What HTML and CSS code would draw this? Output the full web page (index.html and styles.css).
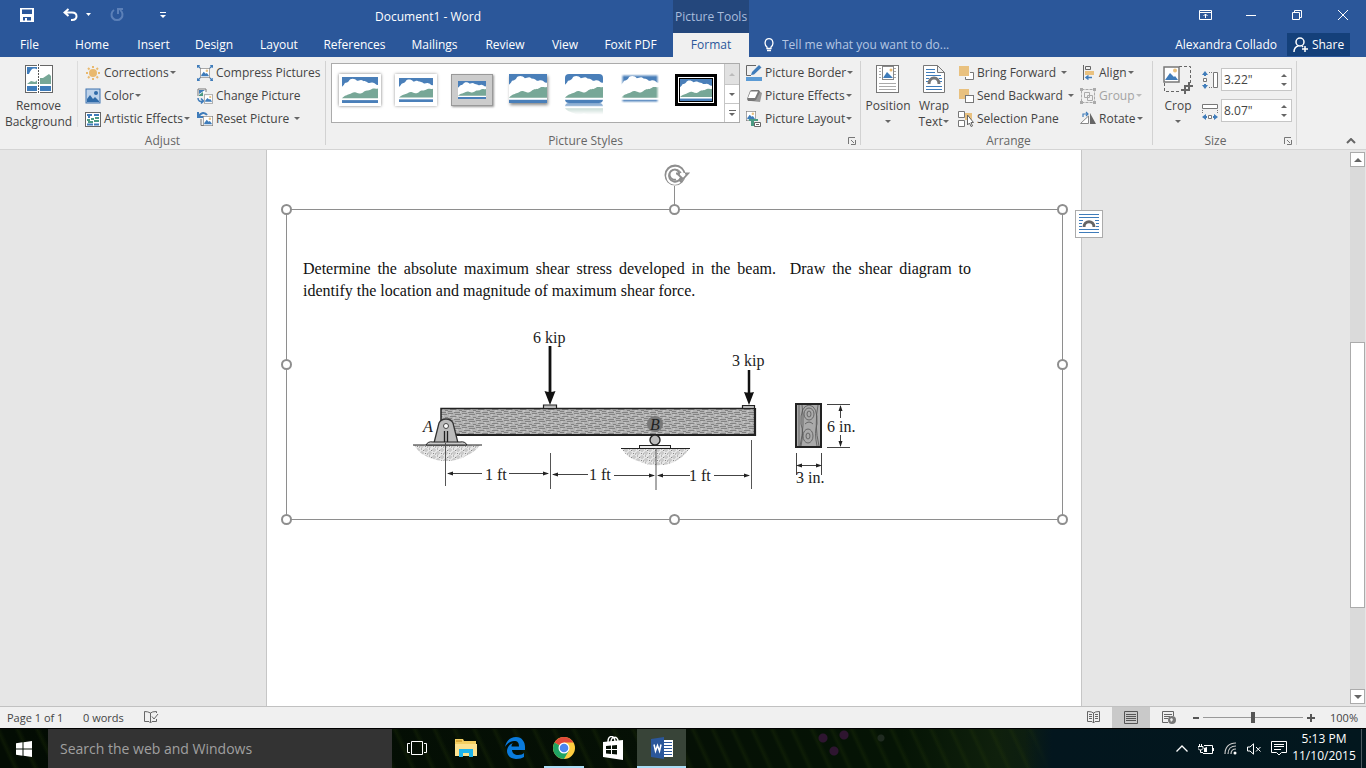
FILE: index.html
```html
<!DOCTYPE html>
<html lang="en">
<head>
    <meta charset="UTF-8">
    <meta name="viewport" content="width=device-width, initial-scale=1.0">
    <title>Document1 - Word</title>
    <link rel="stylesheet" href="styles.css">
</head>
<body>
    <!-- Shared drawings -->
    <svg class="sprite" width="0" height="0" aria-hidden="true">
        <symbol id="photo" viewBox="0 0 36 27" preserveAspectRatio="none">
            <rect width="36" height="27" fill="#fff"/>
            <path d="M0 0H36V8C34 9 33 6 31 6C29 5 28 7 26 6C24 4 22 5 21 4C19 2 17 4 15 4C13 1 8 1 7 4C5 7 3 5 2 8L0 10Z" fill="#4a7fb9"/>
            <path d="M0 22C3 19 5 19 7 18C10 17 11 15 14 16C17 17 18 18 21 16C24 13 26 15 29 13C31 11 33 13 36 12V22Z" fill="#77a797"/>
            <rect y="24" width="36" height="3" fill="#4a7fb9"/>
        </symbol>
        <symbol id="mini" viewBox="0 0 16 16">
            <rect x=".5" y=".5" width="15" height="15" fill="#fff" stroke="#777"/>
            <path d="M2 13V11L6 6L9 9L11 8L14 12V13Z" fill="#3f7cba"/>
            <circle cx="11" cy="4.500" r="2" fill="#e9c17f"/>
        </symbol>
        <symbol id="launcher" viewBox="0 0 8 8">
            <path d="M.5 7V.5H7M3 3L6 6M7.500 3V7.500H3" fill="none" stroke="#777"/>
        </symbol>
    </svg>

    <div class="word">
        <header class="title-bar">
            <div class="quick-access">
                <button class="qa-save" aria-label="Save"><svg width="14" height="14" viewBox="0 0 14 14"><path d="M0 0H14V14H0ZM2 1.500V6H12V1.500ZM3 9V12.500H5V10H7V12.500H11V9Z" fill="#fff" fill-rule="evenodd"/></svg></button>
                <button class="qa-undo" aria-label="Undo"><svg width="28" height="14" viewBox="0 0 28 14"><path d="M5.500 1L1.500 4.500L5.500 8M2 4.500H9C15 4.500 15 12 9 12H8" fill="none" stroke="#fff" stroke-width="2"/><path d="M23 5H28L25.500 8Z" fill="#fff"/></svg></button>
                <button class="qa-redo" aria-label="Repeat"><svg width="14" height="14" viewBox="0 0 14 14"><path d="M4 2A5.500 5.500 0 1 0 10 2M8 6V1H13" fill="none" stroke="#5c80b8" stroke-width="2"/></svg></button>
                <button class="qa-more" aria-label="Customize"><svg width="6" height="6" viewBox="0 0 6 6"><path d="M0 .5H6" stroke="#fff"/><path d="M0 3H6L3 6Z" fill="#fff"/></svg></button>
            </div>
            <h1 class="doc-title">Document1 - Word</h1>
            <div class="context-title">Picture Tools</div>
            <div class="window-buttons">
                <button aria-label="Ribbon options"><svg width="13" height="10" viewBox="0 0 13 10"><path d="M.5 .5H12.500V9.500H.5ZM.5 2.500H12.500M6.500 8V4M4.500 6L6.500 4L8.500 6" fill="none" stroke="#fff"/></svg></button>
                <button aria-label="Minimize"><svg width="10" height="10" viewBox="0 0 10 10"><path d="M0 5.500H10" stroke="#fff"/></svg></button>
                <button aria-label="Restore"><svg width="10" height="10" viewBox="0 0 10 10"><path d="M.5 2.500H7.500V9.500H.5ZM2.500 2.500V.5H9.500V7.500H7.500" fill="none" stroke="#fff"/></svg></button>
                <button aria-label="Close"><svg width="10" height="10" viewBox="0 0 10 10"><path d="M0 0L10 10M10 0L0 10" stroke="#fff"/></svg></button>
            </div>
        </header>

        <nav class="tabs">
            <div class="tab-list">
                <button class="tab">File</button>
                <button class="tab">Home</button>
                <button class="tab">Insert</button>
                <button class="tab">Design</button>
                <button class="tab">Layout</button>
                <button class="tab">References</button>
                <button class="tab">Mailings</button>
                <button class="tab">Review</button>
                <button class="tab">View</button>
                <button class="tab">Foxit PDF</button>
                <button class="tab active">Format</button>
            </div>
            <label class="tell-me">
                <svg width="10" height="14" viewBox="0 0 10 14"><path d="M3 10.500V9C0 7 .5 .7 5 .7S10 7 7 9V10.500ZM3 12.500H7" fill="none" stroke="#fff" stroke-width="1.300"/></svg>
                <input type="text" placeholder="Tell me what you want to do..." aria-label="Tell me what you want to do">
            </label>
            <span class="user">Alexandra Collado</span>
            <button class="share"><svg width="16" height="16" viewBox="0 0 16 16"><circle cx="7" cy="5" r="4" fill="none" stroke="#fff" stroke-width="1.500"/><path d="M1 15C1 11 3 9.500 5.500 9M9 9L10 10M12 9V15M9 12H15" fill="none" stroke="#fff" stroke-width="1.500"/></svg>Share</button>
        </nav>

        <section class="ribbon">
            <div class="group adjust">
                <div class="group-body">
                    <button class="big remove-bg">
                        <svg width="28" height="30" viewBox="0 0 28 30"><rect x=".5" y="1.500" width="27" height="27" fill="#fff" stroke="#666"/><path d="M2 3H13V6C8 3 6 5 4 10H2Z" fill="#3f7cba"/><path d="M2 20L6 17L10 18L15 14H18L24 10L26 12V20H2Z" fill="#77a797"/><path d="M2 22H26V27H2Z" fill="#3f7cba"/><path d="M13.500 0V30" stroke="#fff" stroke-width="3"/><path d="M13.500 0V30" stroke="#555" stroke-dasharray="2 1"/></svg>
                        <span>Remove<br>Background</span>
                    </button>
                    <div class="rows col-a">
                        <button class="cmd"><svg width="16" height="16" viewBox="0 0 16 16"><circle cx="8" cy="8" r="4" fill="#e9b96e"/><path d="M8 1V3M8 13V15M1 8H3M13 8H15M3 3L4.500 4.500M11.500 11.500L13 13M13 3L11.500 4.500M3 13L4.500 11.500" stroke="#e9b96e" stroke-width="2"/></svg>Corrections<i class="caret"></i></button>
                        <button class="cmd"><svg width="16" height="16" viewBox="0 0 16 16"><rect x="1" y="1" width="14" height="14" fill="#bdd2ea" stroke="#3f72ad"/><path d="M2 14V11L5 7L8 11L10 9L14 13V14Z" fill="#2e6aa8"/><circle cx="11" cy="5" r="2" fill="#2e6aa8"/></svg>Color<i class="caret"></i></button>
                        <button class="cmd"><svg width="16" height="16" viewBox="0 0 16 16"><rect x=".5" y="1.500" width="15" height="14" fill="#fff" stroke="#666"/><path d="M2 4H7M9 4H14M3 6H5" stroke="#3f7cba" stroke-width="2"/><path d="M2 9H5M6 8H9M10 7H14M3 11H8M9 10H14" stroke="#4b9a83" stroke-width="2"/><path d="M2 13.500H8M9 13.500H14" stroke="#3f7cba" stroke-width="2"/></svg>Artistic Effects<i class="caret"></i></button>
                    </div>
                    <div class="rows">
                        <button class="cmd"><svg width="16" height="16" viewBox="0 0 16 16"><path d="M0 3V0H3M0 0L3 3M13 0H16V3M16 0L13 3M0 13V16H3M0 16L3 13M13 16H16V13M16 16L13 13" fill="none" stroke="#3f7cba" stroke-width="1.500"/><use href="#mini" x="3" y="3" width="10" height="10"/></svg>Compress Pictures</button>
                        <button class="cmd"><svg width="16" height="16" viewBox="0 0 16 16"><path d="M1 8V1H9V4" fill="#fff" stroke="#777"/><path d="M2 2H8L5 4L2 6Z" fill="#3f7cba"/><path d="M2 7L6 4V8H2Z" fill="#4b9a83"/><path d="M1 10C1 13 3 14 6 13M4 10.500L6.500 13L4 15.500" fill="none" stroke="#3f7cba" stroke-width="1.500"/><use href="#mini" x="7" y="6" width="9" height="10"/></svg>Change Picture</button>
                        <button class="cmd"><svg width="16" height="16" viewBox="0 0 16 16"><path d="M1 1V6H6M1.500 5.500C4 1 8 1 10 4" fill="none" stroke="#3f7cba" stroke-width="2"/><path d="M4 8V14.500H7" fill="none" stroke="#777"/><use href="#mini" x="6" y="4" width="10" height="12"/></svg>Reset Picture<i class="caret wide"></i></button>
                    </div>
                </div>
                <div class="group-label">Adjust</div>
            </div>

            <div class="group styles">
                <div class="group-body">
                    <div class="gallery">
                        <button class="thumb t1" aria-label="Simple Frame, White"><svg><use href="#photo"/></svg></button>
                        <button class="thumb t2" aria-label="Beveled Matte, White"><svg><use href="#photo"/></svg></button>
                        <button class="thumb t3" aria-label="Metal Frame"><svg><use href="#photo"/></svg></button>
                        <button class="thumb t4" aria-label="Drop Shadow Rectangle"><svg><use href="#photo"/></svg></button>
                        <button class="thumb t5" aria-label="Reflected Rounded Rectangle"><svg><use href="#photo"/></svg></button>
                        <button class="thumb t6" aria-label="Soft Edge Rectangle"><svg><use href="#photo"/></svg></button>
                        <button class="thumb t7" aria-label="Double Frame, Black"><svg><use href="#photo"/></svg></button>
                        <div class="gallery-scroll">
                            <button class="off" aria-label="Row up"><i class="caret up"></i></button>
                            <button aria-label="Row down"><i class="caret"></i></button>
                            <button class="more" aria-label="More styles"><i class="caret"></i></button>
                        </div>
                    </div>
                    <div class="rows">
                        <button class="cmd"><svg width="16" height="16" viewBox="0 0 16 16"><path d="M10 .5H.5V10.500H5" fill="none" stroke="#666"/><path d="M5 10L6 7L13 0L15.500 2.500L8 9.500Z" fill="#3f7cba"/><rect y="12" width="16" height="4" fill="#5b9bd5"/></svg>Picture Border<i class="caret"></i></button>
                        <button class="cmd"><svg width="16" height="16" viewBox="0 0 16 16"><path d="M5 13L14 14L16 5L13 3Z" fill="#999"/><path d="M1 11L4 3Q5 2 6 2H13L14 4L10 12L8 13H2Z" fill="#777"/><path d="M2 10L4.500 3.500H12L9 10Z" fill="#fff"/></svg>Picture Effects<i class="caret"></i></button>
                        <button class="cmd"><svg width="16" height="16" viewBox="0 0 16 16"><use href="#mini" width="10" height="10"/><path d="M3 8H12V10H8V14H10V15H5V10H3Z" fill="#4b9a83"/><path d="M8.500 11.500H14.500V15.500H8.500ZM10 13.500H13" fill="#fff" stroke="#666"/></svg>Picture Layout<i class="caret"></i></button>
                    </div>
                </div>
                <div class="group-label">Picture Styles</div>
                <button class="launch" aria-label="Format shape"><svg width="8" height="8"><use href="#launcher"/></svg></button>
            </div>

            <div class="group arrange">
                <div class="group-body">
                    <button class="big position">
                        <svg width="24" height="30" viewBox="0 0 24 30"><rect x=".5" y="1.500" width="22" height="27" fill="#fff" stroke="#777"/><path d="M3 4.500H5M3 7.500H5M3 10.500H5M3 13.500H5M18 4.500H20M18 7.500H20M18 10.500H20M18 13.500H20M3 19.500H20M3 22.500H20M3 25.500H20" stroke="#aaa"/><rect x="6.500" y="2.500" width="11" height="13" fill="#fff" stroke="#888"/><path d="M7 14L11 8L17 14Z" fill="#3f7cba"/><circle cx="15" cy="6" r="1.500" fill="#e9b96e"/></svg>
                        <span>Position<br><i class="caret"></i></span>
                    </button>
                    <button class="big wrap">
                        <svg width="22" height="30" viewBox="0 0 22 30"><path d="M.5 1.500H14.500L21.500 8.500V28.500H.5ZM14.500 1.500V8.500H21.500" fill="#fff" stroke="#777"/><path d="M3 5.500H12M3 8.500H12M3 11.500H18M3 14.500H6M16 14.500H19M3 17.500H5M17 17.500H19M3 22.500H19M3 25.500H19" stroke="#3f7cba"/><path d="M6 20C6 12 16 12 16 20" fill="none" stroke="#777" stroke-width="3"/></svg>
                        <span>Wrap<br>Text<i class="caret"></i></span>
                    </button>
                    <div class="rows col-order">
                        <button class="cmd"><svg width="16" height="16" viewBox="0 0 16 16"><path d="M12 7.500H15.500V14.500H7.500V12" fill="#fff" stroke="#777"/><rect x="1" y="1" width="10" height="10" fill="#e9c17f"/></svg>Bring Forward<i class="caret wide"></i></button>
                        <button class="cmd"><svg width="16" height="16" viewBox="0 0 16 16"><rect x="1" y="1" width="10" height="10" fill="#e9c17f"/><rect x="7.500" y="7.500" width="8" height="7" fill="#fff" stroke="#777"/></svg>Send Backward<i class="caret wide"></i></button>
                        <button class="cmd"><svg width="16" height="16" viewBox="0 0 16 16"><path d="M.5 .5H6.500V6.500H.5ZM.5 9.500H6.500V15.500H.5Z" fill="#fff" stroke="#777"/><rect x="7" y="2" width="7" height="7" fill="#e9c17f"/><path d="M9.500 4V14L11.500 12L13 15.500L14.500 15L13 11.500H15.500Z" fill="#fff" stroke="#666"/></svg>Selection Pane</button>
                    </div>
                    <div class="rows">
                        <button class="cmd"><svg width="16" height="16" viewBox="0 0 16 16"><path d="M3.500 0V15M5.500 1.500H10.500V4.500H5.500Z" fill="none" stroke="#666"/><rect x="5" y="6" width="9" height="4" fill="#e9c17f"/><path d="M6 12.500H12M8.500 10.500L6 12.500L8.500 14.500" fill="none" stroke="#3f7cba" stroke-width="1.500"/></svg>Align<i class="caret"></i></button>
                        <button class="cmd" disabled><svg width="16" height="16" viewBox="0 0 16 16"><path d="M1.500 1.500H14.500V14.500H1.500Z" fill="none" stroke="#aaa" stroke-dasharray="3 1"/><path d="M4.500 4.500H9.500V9.500H4.500ZM7.500 7.500H12.500V12.500H7.500Z" fill="none" stroke="#aaa"/><path d="M0 0H3V3H0ZM13 0H16V3H13ZM0 13H3V16H0ZM13 13H16V16H13Z" fill="#aaa"/></svg>Group<i class="caret"></i></button>
                        <button class="cmd"><svg width="16" height="16" viewBox="0 0 16 16"><path d="M.5 12.500L8.500 5V12.500Z" fill="#fff" stroke="#888"/><path d="M10 2V13H16Z" fill="#666"/><path d="M3 6V3H8M6 1L8 3L6 5" fill="none" stroke="#3f7cba" stroke-width="1.200"/></svg>Rotate<i class="caret"></i></button>
                    </div>
                </div>
                <div class="group-label">Arrange</div>
            </div>

            <div class="group size">
                <div class="group-body">
                    <button class="big crop">
                        <svg width="30" height="30" viewBox="0 0 30 30"><path d="M16 2.500H27.500V20M1.500 19V27.500H18" fill="none" stroke="#666" stroke-dasharray="3 2"/><rect x="1" y="3" width="15" height="15" fill="#fff" stroke="#777" stroke-width="1.500"/><path d="M2 16L7 9L11 13L12 12L15 16Z" fill="#3f7cba"/><circle cx="12" cy="6.500" r="2" fill="#e9c17f"/><path d="M18 26H26V18M22 30V22H30" fill="none" stroke="#666" stroke-width="2"/></svg>
                        <span>Crop<br><i class="caret"></i></span>
                    </button>
                    <div class="dims">
                        <div class="dim">
                            <label for="height"><svg width="16" height="18" viewBox="0 0 16 18"><path d="M3 0L6 4H0ZM3 18L0 14H6ZM2 3H4V5H2ZM2 13H4V15H2Z" fill="#3f7cba"/><path d="M1.500 7.500H4.500V10.500H1.500ZM11.500 1.500H15.500V16.500H11.500Z" fill="#fff" stroke="#777"/><path d="M7 1.500H11M7 16.500H11" stroke="#777" stroke-dasharray="1 1"/></svg></label>
                            <div class="spin"><input id="height" type="text" value='3.22"' aria-label="Shape height"><span class="arrows"><button aria-label="Taller"><i class="caret up"></i></button><button aria-label="Shorter"><i class="caret"></i></button></span></div>
                        </div>
                        <div class="dim">
                            <label for="width"><svg width="16" height="18" viewBox="0 0 16 18"><path d="M.5 2.500H15.500V6.500H.5ZM6.500 13.500H9.500V16.500H6.500Z" fill="#fff" stroke="#777"/><path d="M0 15L4 12V14H5V16H4V18ZM16 15L12 12V14H11V16H12V18Z" fill="#3f7cba"/><path d="M.5 8V12M15.500 8V12" stroke="#777" stroke-dasharray="1 1"/></svg></label>
                            <div class="spin"><input id="width" type="text" value='8.07"' aria-label="Shape width"><span class="arrows"><button aria-label="Wider"><i class="caret up"></i></button><button aria-label="Narrower"><i class="caret"></i></button></span></div>
                        </div>
                    </div>
                </div>
                <div class="group-label">Size</div>
                <button class="launch" aria-label="Layout dialog"><svg width="8" height="8"><use href="#launcher"/></svg></button>
            </div>
            <button class="collapse" aria-label="Collapse ribbon"><svg width="10" height="6" viewBox="0 0 10 6"><path d="M1 5L5 1L9 5" fill="none" stroke="#666" stroke-width="2"/></svg></button>
        </section>

        <main class="workspace">
            <div class="canvas">
                <article class="page">
                    <div class="picture">
                        <p class="problem">Determine the absolute maximum shear stress developed in the beam.&nbsp; Draw the shear diagram to identify the location and magnitude of maximum shear force.</p>
                        <svg class="beam" viewBox="400 325 480 175" width="480" height="175">
                            <defs>
                                <pattern id="grain" width="14" height="7" patternUnits="userSpaceOnUse">
                                    <rect width="14" height="7" fill="#b2b2b2"/>
                                    <path d="M0 .5H5M7 1.500H13M2 3.500H9M11 4.500H14M0 5.500H4M6 6.500H12" stroke="#777" stroke-width=".8"/>
                                    <path d="M1 2H3M8 3H10M5 5H7M12 6H13" stroke="#ddd" stroke-width=".8"/>
                                </pattern>
                                <pattern id="gravel" width="8" height="7" patternUnits="userSpaceOnUse">
                                    <rect width="8" height="7" fill="#e6e6e6"/>
                                    <circle cx="2" cy="2" r="1.200" fill="#fff" stroke="#888" stroke-width=".6"/>
                                    <circle cx="6" cy="5" r="1.200" fill="#fff" stroke="#888" stroke-width=".6"/>
                                    <path d="M5 1H6M1 5.500H2M3 6H4M7 2.500H8" stroke="#888"/>
                                </pattern>
                            </defs>
                            <!-- ground -->
                            <path d="M414 445H480C476 451 470 454 464 457C455 462 440 462 430 458C422 455 418 451 414 445Z" fill="url(#gravel)"/>
                            <path d="M622 449H689C685 455 680 459 674 462C664 467 648 466 638 461C630 459 625 454 622 449Z" fill="url(#gravel)"/>
                            <path d="M413 445H482M621 448.500H690" stroke="#222" stroke-width="1.200"/>
                            <!-- beam -->
                            <rect x="441" y="408.500" width="314" height="26.500" fill="url(#grain)"/>
                            <path d="M441 436V408.500H755" fill="none" stroke="#222" stroke-width="1.500"/>
                            <path d="M441 435H755V408" fill="none" stroke="#222" stroke-width="2.200"/>
                            <!-- pin support -->
                            <path d="M434 443L439 423Q441 419 446 419Q451 419 453 423L458 443Z" fill="#bbb" stroke="#333" stroke-width="1.300"/>
                            <circle cx="446" cy="426" r="2.500" fill="#fff" stroke="#444"/>
                            <path d="M444.500 431V442M447.500 431V442" stroke="#222" stroke-width="1.300"/>
                            <path d="M426 445Q428 441 433 442H460Q465 441 467 445Z" fill="#ccc" stroke="#222"/>
                            <!-- roller support -->
                            <circle cx="655" cy="424" r="8" fill="#777"/>
                            <circle cx="655" cy="440" r="5" fill="#bbb" stroke="#222" stroke-width="1.400"/>
                            <rect x="639.500" y="445.500" width="31" height="3" fill="#eee" stroke="#222"/>
                            <!-- loads -->
                            <path d="M550 346V394" stroke="#111" stroke-width="2.800"/>
                            <path d="M544.500 391Q550 393 555.500 391L550 405Z" fill="#111"/>
                            <path d="M749 370V395" stroke="#111" stroke-width="2.500"/>
                            <path d="M744 392Q749 393 754 392L749 405Z" fill="#111"/>
                            <path d="M543.500 405H556.500V408.500H543.500ZM742.500 405.500H754.500V408.500H742.500Z" fill="#bbb" stroke="#222" stroke-width="1.200"/>
                            <!-- dimensions -->
                            <path d="M445.500 443V486M550.500 453V489M656 448V490M751.500 440V489" stroke="#555"/>
                            <path d="M448 473.500H482M509 473.500H548M553 474.500H588M614 475.500H654M658 475.500H690M714 475.500H749" stroke="#444"/>
                            <path d="M447 473.500L453 471.500V475.500ZM549 473.500L543 471.500V475.500ZM552 474.500L558 472.500V476.500ZM655 475.500L649 473.500V477.500ZM657 475.500L663 473.500V477.500ZM750 475.500L744 473.500V477.500Z" fill="#222"/>
                            <!-- cross section -->
                            <rect x="796" y="404" width="25" height="43" fill="#aaa"/>
                            <path d="M799 405V446M802 405Q805 425 800 446M818 405Q814 425 819 446" fill="none" stroke="#666"/>
                            <g fill="none" stroke="#555" stroke-width=".8">
                                <ellipse cx="809" cy="414" rx="2" ry="3"/><ellipse cx="809" cy="414" rx="5" ry="6"/><path d="M801 424Q800 406 809 405Q818 406 817 424Q814 432 817 446"/>
                                <ellipse cx="808" cy="436" rx="2" ry="3"/><ellipse cx="808" cy="436" rx="5" ry="7"/><path d="M801 424Q804 432 801 446M805 424Q809 420 813 424"/>
                            </g>
                            <rect x="796" y="404" width="25" height="43" fill="none" stroke="#222" stroke-width="2"/>
                            <path d="M827 404.500H850M827 447.500H850M840.500 406V418M840.500 435V446M796.500 453V475M821.500 453V475M798 465.500H820" stroke="#444"/>
                            <path d="M840.500 405L838.500 411H842.500ZM840.500 447L838.500 441H842.500ZM796 465.500L802 463.500V467.500ZM822 465.500L816 463.500V467.500Z" fill="#222"/>
                            <g class="beam-text">
                                <text x="533" y="343">6 kip</text>
                                <text x="732" y="366">3 kip</text>
                                <text x="485" y="480">1 ft</text>
                                <text x="589" y="480">1 ft</text>
                                <text x="689" y="481">1 ft</text>
                                <text x="827" y="432">6 in.</text>
                                <text x="796" y="483">3 in.</text>
                                <text x="423" y="432" class="node">A</text>
                                <text x="650" y="430" class="node">B</text>
                            </g>
                        </svg>
                        <i class="stem"></i>
                        <svg class="rotate" width="26" height="22" viewBox="0 0 26 22"><circle cx="11" cy="11" r="8" fill="none" stroke="#8e8e8e" stroke-width="5"/><path d="M16 18A8 8 0 1 1 19 10.500" fill="none" stroke="#fff" stroke-width="2"/><path d="M14 19L20 15L25 9H13L19 15.500" fill="#fff"/><path d="M12 9.500H16M21 9.500H24L19 15L13 9.500M12 15.500A5 5 0 1 1 15.500 9.500M16 14.500L17 18" fill="none" stroke="#8e8e8e" stroke-width="1.800"/></svg>
                        <i class="handle nw"></i><i class="handle n"></i><i class="handle ne"></i>
                        <i class="handle w"></i><i class="handle e"></i>
                        <i class="handle sw"></i><i class="handle s"></i><i class="handle se"></i>
                        <button class="layout-options" aria-label="Layout Options"><svg width="20" height="20" viewBox="0 0 20 20"><path d="M0 .5H20M0 3.500H20M0 6.500H4M16 6.500H20M0 9.500H3M17 9.500H20M0 12.500H3M17 12.500H20M0 15.500H20M0 18.500H20" stroke="#3f7cba"/><path d="M5 13C5 6 15 6 15 13" fill="none" stroke="#666" stroke-width="3"/></svg></button>
                    </div>
                </article>
            </div>
            <div class="scrollbar">
                <button aria-label="Scroll up"><i class="caret up"></i></button>
                <div class="track"><div class="grip"></div></div>
                <button aria-label="Scroll down"><i class="caret"></i></button>
            </div>
        </main>

        <footer class="status">
            <span class="pages">Page 1 of 1</span>
            <span class="words">0 words</span>
            <button class="proof" aria-label="Proofing"><svg width="15" height="13" viewBox="0 0 15 13"><path d="M6.500 11.500V2Q4 .5 .5 .5V10.500H5L6.500 12L8 10.500H12.500V8M6.500 2Q8 .5 12.500 .5V2M8 5.500L10 8L14 3" fill="none" stroke="#666"/></svg></button>
            <div class="views">
                <button aria-label="Read Mode"><svg width="13" height="13" viewBox="0 0 13 13"><path d="M.5 .5Q5 .5 6.500 2Q8 .5 12.500 .5V10.500H8L6.500 12L5 10.500H.5ZM6.500 2V12" fill="none" stroke="#666"/><path d="M2 3.500H5M2 5.500H5M2 7.500H5M8 3.500H11M8 5.500H11M8 7.500H11" stroke="#666"/></svg></button>
                <button class="active" aria-label="Print Layout"><svg width="14" height="13" viewBox="0 0 14 13"><path d="M.5 .5H13.500V12.500H.5ZM2 3.500H12M2 5.500H12M2 7.500H12M2 9.500H12" fill="none" stroke="#555"/></svg></button>
                <button aria-label="Web Layout"><svg width="14" height="13" viewBox="0 0 14 13"><path d="M11.500 5V.5H.5V11.500H6M2 3.500H10M2 5.500H8M2 7.500H6" fill="none" stroke="#666"/><circle cx="10" cy="9" r="4" fill="#777"/><path d="M8 8L10 7L11 9L9 11Z" fill="#eee"/></svg></button>
            </div>
            <button class="zoom-step minus" aria-label="Zoom out"></button>
            <input class="zoom" type="range" min="0" max="100" value="50" aria-label="Zoom">
            <button class="zoom-step plus" aria-label="Zoom in"></button>
            <span class="percent">100%</span>
        </footer>
    </div>

    <div class="taskbar">
        <button class="start" aria-label="Start"><svg width="16" height="16" viewBox="0 0 16 16"><path d="M0 2.300L6.500 1.300V7.500H0ZM7.500 1.200L16 0V7.500H7.500ZM0 8.500H6.500V14.700L0 13.700ZM7.500 8.500H16V16L7.500 14.800Z" fill="#fff"/></svg></button>
        <input class="search" type="text" placeholder="Search the web and Windows" aria-label="Search the web and Windows">
        <div class="apps">
            <button aria-label="Task View"><svg width="20" height="14" viewBox="0 0 20 14"><path d="M4.500 .5H15.500V13.500H4.500ZM3 2.500H.5V11.500H3M17 2.500H19.500V11.500H17" fill="none" stroke="#fff"/></svg></button>
            <button aria-label="File Explorer"><svg width="22" height="20" viewBox="0 0 22 20"><path d="M0 1H8L9 3H21V18H0Z" fill="#f4cf62"/><path d="M1 2H7V4H1Z" fill="#d9a93a"/><path d="M0 6H22V18H0Z" fill="#fce28f"/><path d="M4 19V11H18V19H14V15H8V19Z" fill="#1eb4ea"/></svg></button>
            <button aria-label="Edge"><svg width="22" height="22" viewBox="0 0 22 22"><path d="M1 10C2 4 6 0 12 0C18 0 21 5 21 10V13H8C8 16 11 18 14 18C17 18 19 17 20 16V20C18 21 16 22 12 22C6 22 3 18 3 14C3 10 6 7 9 6C8 7 7.500 8 7.500 9.500H15C15 6 14 4 10 4C6 4 3 7 1 10Z" fill="#0a7bdc"/></svg></button>
            <button class="running" aria-label="Chrome"><svg width="22" height="22" viewBox="0 0 22 22"><circle cx="11" cy="11" r="11" fill="#ffcd40"/><path d="M11 11L1.500 5.500A11 11 0 0 1 20.500 5.500H11Z" fill="#e04a3a"/><path d="M11 11L1.500 5.500A11 11 0 0 0 11 22L15.800 13.700Z" fill="#1fa463"/><circle cx="11" cy="11" r="5.500" fill="#fff"/><circle cx="11" cy="11" r="4.300" fill="#4a86ee"/></svg></button>
            <button aria-label="Store"><svg width="22" height="24" viewBox="0 0 22 24"><path d="M1 6L21 4V24L1 21Z" fill="#fff"/><path d="M6 6C6 -1 12 -1 13 5M9 6C9 0 16 0 16 5" fill="none" stroke="#fff" stroke-width="1.500"/><path d="M4 10L9 9.500V13H4ZM10 9.400L15 9V13H10ZM4 14H9V18L4 17.500ZM10 14H15V18.500L10 18Z" fill="#061006"/></svg></button>
            <button class="current" aria-label="Word"><svg width="22" height="22" viewBox="0 0 22 22"><rect x="11" y="3" width="11" height="17" fill="#fff"/><path d="M13 5.500H21M13 8.500H21M13 11.500H21M13 14.500H21M13 17.500H21" stroke="#2b579a"/><path d="M0 2L13 0V22L0 20Z" fill="#2b579a"/><path d="M3 7.500L4.500 14L6.500 8.500L8.500 14L10 7.500" fill="none" stroke="#fff" stroke-width="1.500"/></svg></button>
        </div>
        <div class="tray">
            <svg width="12" height="7" viewBox="0 0 12 7"><path d="M.5 6.500L6 1L11.500 6.500" fill="none" stroke="#fff" stroke-width="1.300"/></svg>
            <svg width="16" height="12" viewBox="0 0 16 12"><path d="M6 2.500H14.500V10.500H5M15.500 5V8M0 3.500H5V5.500L3.500 7H1.500L0 5.500ZM1.500 3V1M3.500 3V1M2.500 7V9.500H5" fill="none" stroke="#fff"/><path d="M6 5L9 4V9H6Z" fill="#fff"/></svg>
            <svg width="13" height="13" viewBox="0 0 13 13"><path d="M1 12C1 5 5 1 12 1M4 12C4 7 7 4 12 4M7 12C7 9 9 7 12 7" fill="none" stroke="#ccc" stroke-width="1.200"/><circle cx="11" cy="11" r="1.500" fill="#fff"/></svg>
            <svg width="14" height="12" viewBox="0 0 14 12"><path d="M.5 4H3L6.500 .8V11.200L3 8H.5ZM9 4L13.500 8.500M13.500 4L9 8.500" fill="none" stroke="#fff"/></svg>
            <svg width="16" height="15" viewBox="0 0 16 15"><path d="M.5 .5H15.500V11.500H10.500L8 14L5.500 11.500H.5ZM3 3.500H13M3 5.500H13M3 8.500H10" fill="none" stroke="#fff"/></svg>
        </div>
        <div class="clock">5:13 PM<br>11/10/2015</div>
    </div>
</body>
</html>
```
FILE: styles.css
```css
* {
    box-sizing: border-box;
}

body {
    margin: 0;
    height: 100vh;
    display: flex;
    flex-direction: column;
    overflow: hidden;
    font-family: "Open Sans", "Noto Sans", sans-serif;
    font-size: 12px;
    line-height: 16px;
    color: #444;
}

button,
input {
    font: inherit;
    color: inherit;
    background: none;
    border: none;
    padding: 0;
    margin: 0;
}

button {
    display: flex;
    align-items: center;
    justify-content: center;
    white-space: nowrap;
}

svg {
    display: block;
    flex: none;
}

.sprite {
    position: absolute;
}

.word {
    flex: 1;
    min-height: 0;
    display: flex;
    flex-direction: column;
}

/* small drop-down arrow */
.caret {
    flex: none;
    display: inline-block;
    border: 3px solid transparent;
    border-top-color: #666;
    border-bottom: none;
    margin-left: 1px;
}

.caret.up {
    border-top: none;
    border-bottom: 3px solid #666;
}

.caret.wide {
    margin-left: 5px;
}

/* Title bar */
.title-bar {
    display: flex;
    height: 33px;
    background: #2b579a;
    color: #fff;
}

.quick-access {
    display: flex;
    align-items: center;
    width: 183px;
    padding: 0 0 4px 20px;
}

.qa-undo {
    margin-left: 29px;
}

.qa-redo {
    margin-left: 19px;
}

.qa-more {
    margin-left: 36px;
}

.doc-title {
    width: 490px;
    margin: 0;
    font-size: 12px;
    font-weight: normal;
    line-height: 33px;
    text-align: center;
}

.context-title {
    width: 76px;
    background: #24477c;
    color: #a9bddd;
    line-height: 34px;
    text-align: center;
    white-space: nowrap;
}

.window-buttons {
    display: flex;
    margin-left: auto;
    padding-bottom: 3px;
}

.window-buttons button {
    width: 46px;
}

/* Tabs */
.tabs {
    display: flex;
    height: 24px;
    background: #2b579a;
    color: #fff;
}

.tab-list {
    display: grid;
    grid-template-columns: 59px 66px 57px 64px 66px 85px 75px 66px 54px 77px 4px 76px;
}

.tab.active {
    grid-column: 12;
    background: #f0f0f0;
    color: #2b579a;
}

.tell-me {
    display: flex;
    align-items: center;
    gap: 8px;
    flex: 1;
    padding-left: 15px;
}

.tell-me input {
    flex: 1;
}

.tell-me input::placeholder {
    color: #b5c6e2;
    opacity: 1;
}

.user {
    line-height: 24px;
    margin-right: 10px;
}

.share {
    width: 63px;
    gap: 3px;
    height: 23px;
    margin-right: 16px;
    background: #14407a;
}

/* Ribbon */
.ribbon {
    display: flex;
    height: 93px;
    padding-top: 4px;
    background: #f0f0f0;
    border-bottom: 1px solid #d4d4d4;
}

.group {
    position: relative;
    display: flex;
    flex-direction: column;
    margin-bottom: 4px;
    border-right: 1px solid #d2d2d2;
}

.group-body {
    display: flex;
    height: 69px;
}

.group-label {
    text-align: center;
    line-height: 22px;
    margin-bottom: -6px;
    color: #666;
}

.adjust {
    width: 326px;
}

.styles {
    width: 535px;
    padding-left: 5px;
}

.arrange {
    width: 292px;
    padding-left: 4px;
}

.size {
    width: 144px;
    padding-left: 8px;
}

.size .group-label {
    padding-right: 26px;
}

.styles .group-label {
    padding-right: 20px;
}

.launch {
    position: absolute;
    right: 4px;
    bottom: 0;
}

.big {
    flex-direction: column;
    justify-content: flex-start;
    padding-top: 3px;
    text-align: center;
}

.big span {
    margin-top: 4px;
}

.big span .caret {
    vertical-align: 3px;
}

.remove-bg {
    width: 78px;
    height: 66px;
    border-right: 1px solid #dcdcdc;
}

.position {
    width: 46px;
}

.wrap {
    width: 46px;
}

.crop {
    width: 34px;
}

.position .caret,
.crop .caret {
    margin-left: 0;
}

.rows {
    display: grid;
    grid-template-rows: repeat(3, 23px);
    padding-left: 6px;
}

.cmd {
    justify-content: flex-start;
}

.cmd svg {
    margin-right: 3px;
}

.cmd:disabled {
    color: #a3a3a3;
}

.cmd:disabled .caret {
    border-top-color: #bbb;
}

.col-a {
    width: 118px;
    padding-left: 7px;
}

.col-order {
    width: 122px;
    padding-left: 1px;
}

.adjust .rows:last-child {
    padding-left: 1px;
}

.arrange .rows:last-child {
    padding-left: 1px;
}

/* Style gallery */
.gallery {
    display: flex;
    width: 409px;
    height: 60px;
    margin-top: 2px;
    background: #fff;
    border: 1px solid #ababab;
}

.thumb {
    width: 56px;
    align-items: flex-start;
    padding-top: 10px;
}

.thumb svg {
    width: 42px;
    height: 32px;
}

.t1 svg {
    padding: 3px;
    box-shadow: 0 0 3px #777;
}

.t2 svg {
    padding: 4px;
    box-shadow: 0 0 3px #999;
}

.t3 svg {
    padding: 6px;
    background: #ccc;
    border: 1px solid #999;
    box-shadow: 1px 1px 2px #999;
}

.t4 svg,
.t5 svg,
.t6 svg {
    width: 38px;
    height: 29px;
}

.t4 svg {
    box-shadow: 1px 2px 3px #888;
}

.t5 svg {
    border-radius: 4px;
    -webkit-box-reflect: below 0 linear-gradient(transparent 60%, rgba(0, 0, 0, 0.7));
}

.t6 svg {
    -webkit-mask: linear-gradient(90deg, transparent, #000 3px, #000 35px, transparent), linear-gradient(transparent, #000 3px, #000 26px, transparent);
    -webkit-mask-composite: source-in;
    mask-composite: intersect;
}

.t7 svg {
    padding: 2px;
    border: 3px solid #000;
    background: #000;
    outline: 1px solid #fff;
    outline-offset: -4px;
}

.gallery-scroll {
    display: grid;
    grid-template-rows: 20px 19px 19px;
    width: 15px;
    margin-left: auto;
    border-left: 1px solid #c6c6c6;
}

.gallery-scroll button + button {
    border-top: 1px solid #c6c6c6;
}

.gallery-scroll .caret {
    margin: 0;
}

.gallery-scroll .off {
    background: #e1e1e1;
}

.off .caret.up {
    border-bottom-color: #bbb;
}

.more {
    flex-direction: column;
    gap: 2px;
}

.more::before {
    content: "";
    width: 7px;
    height: 1px;
    background: #666;
}

/* Size boxes */
.dims {
    display: grid;
    align-content: start;
    gap: 8px;
    padding: 7px 0 0 7px;
}

.dim {
    display: flex;
    align-items: center;
    gap: 3px;
}

.spin {
    display: flex;
    width: 71px;
    height: 23px;
    padding: 0 4px 0 2px;
    background: #fff;
    border: 1px solid #c6c6c6;
}

.spin input {
    flex: 1;
    min-width: 0;
}

.arrows {
    display: grid;
    align-content: center;
    gap: 6px;
}

.arrows .caret {
    margin: 0;
}

.collapse {
    align-self: flex-end;
    margin: 0 10px 5px auto;
}

/* Document */
.workspace {
    flex: 1;
    min-height: 0;
    display: flex;
    background: #e6e6e6;
}

.canvas {
    flex: 1;
    overflow: hidden;
}

.page {
    width: 816px;
    min-height: 100%;
    margin: 0 auto;
    padding: 59px 18px 0 19px;
    background: #fff;
    border: 1px solid #c6c6c6;
    border-width: 0 1px;
}

.picture {
    position: relative;
    width: 777px;
    height: 311px;
    border: 1px solid #8e8e8e;
    padding: 48px 16px 0;
    color: #111;
}

.problem {
    width: 668px;
    margin: 0;
    font-family: "Liberation Serif", serif;
    font-size: 16px;
    line-height: 22px;
    text-align: justify;
}

.beam {
    margin: 23px 0 0 97px;
}

.beam-text {
    font-family: "Liberation Serif", serif;
    font-size: 16px;
    fill: #222;
}

.beam-text .node {
    font-style: italic;
}

.handle {
    position: absolute;
    width: 11px;
    height: 11px;
    background: #fff;
    border: 2px solid #8e8e8e;
    border-radius: 50%;
}

.nw, .n, .ne { top: -6px; }
.w, .e { top: calc(50% - 6px); }
.sw, .s, .se { bottom: -6px; }
.nw, .w, .sw { left: -6px; }
.n, .s { left: calc(50% - 6px); }
.ne, .e, .se { right: -6px; }

.stem {
    position: absolute;
    left: calc(50% - 1px);
    bottom: 100%;
    height: 24px;
    border-left: 1px solid #8e8e8e;
}

.rotate {
    position: absolute;
    left: 377px;
    top: -46px;
}

.layout-options {
    position: absolute;
    left: 788px;
    top: 0;
    width: 28px;
    height: 28px;
    background: #fff;
    border: 1px solid #ababab;
}

.scrollbar {
    display: flex;
    flex-direction: column;
    width: 18px;
    padding: 2px 1px 2px 2px;
}

.scrollbar button {
    height: 15px;
    background: #fff;
    border: 1px solid #ababab;
}

.scrollbar .caret {
    margin: 0;
    border-width: 4px;
    border-bottom-width: 0;
}

.scrollbar .caret.up {
    border-width: 0 4px 4px;
}

.track {
    flex: 1;
    background: #dadada;
    padding-top: 175px;
}

.grip {
    height: 266px;
    background: #fff;
    border: 1px solid #ababab;
}

/* Status bar */
.status {
    display: flex;
    align-items: center;
    height: 22px;
    padding: 0 8px 0 7px;
    background: #f0f0f0;
    border-top: 1px solid #c1c1c1;
    font-size: 11px;
}

.pages {
    width: 76px;
}

.words {
    width: 61px;
}

.views {
    display: flex;
    align-self: stretch;
    margin-left: auto;
}

.views button {
    width: 38px;
}

.views .active {
    background: #c9c9c9;
}

.zoom-step {
    width: 8px;
    height: 8px;
    background: linear-gradient(#555, #555) center / 8px 2px no-repeat;
}

.minus {
    margin-left: 5px;
    width: 6px;
}

.plus {
    background: linear-gradient(#555, #555) center / 8px 2px no-repeat, linear-gradient(#555, #555) center / 2px 8px no-repeat;
}

.zoom {
    appearance: none;
    width: 100px;
    height: 12px;
    margin: 0 4px;
    background: linear-gradient(#999, #999) center / 100% 1px no-repeat;
}

.zoom::-webkit-slider-thumb {
    appearance: none;
    width: 4px;
    height: 11px;
    background: #555;
}

.percent {
    width: 43px;
    text-align: right;
}

/* Taskbar */
.taskbar {
    display: flex;
    height: 40px;
    color: #fff;
    background:
        linear-gradient(90deg, transparent 75%, #03161e 77%, #02171e),
        radial-gradient(circle at 823px 9px, #2e1530 4px, transparent 5px),
        radial-gradient(circle at 844px 6px, #2e1530 4px, transparent 5px),
        radial-gradient(circle at 834px 22px, #2e1530 4px, transparent 5px),
        radial-gradient(circle at 881px 9px, #1f2a20 3px, transparent 4px),
        repeating-linear-gradient(65deg, transparent 0 11px, rgba(40, 60, 10, 0.25) 14px, transparent 18px),
        linear-gradient(90deg, #030c03 0, #051005 50%, #051405 66%, #0f200c 73%, #0c1d12 76%);
    border-top: 1px solid #000;
}

.start {
    width: 48px;
}

.search {
    width: 344px;
    padding-left: 12px;
    background: #333;
    font-size: 14px;
}

.search::placeholder {
    color: #a0a0a0;
    opacity: 1;
}

.apps {
    display: flex;
}

.apps button {
    width: 49px;
    border-bottom: 2px solid transparent;
}

.apps .current {
    background: #384438;
    border-color: #a9dcf5;
}

.apps .running {
    background: linear-gradient(#a9dcf5, #a9dcf5) center bottom / 40px 2px no-repeat border-box;
}

.tray {
    display: flex;
    align-items: center;
    gap: 10px;
    margin-left: auto;
}

.clock {
    width: 75px;
    margin-right: 4px;
    padding-top: 1px;
    border-right: 1px solid #4b5a60;
    line-height: 17px;
    text-align: center;
}
```
